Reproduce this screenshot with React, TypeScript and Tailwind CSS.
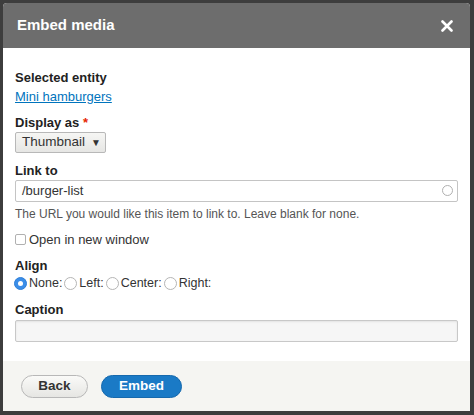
import React from 'react';

const font = { fontFamily: '"Liberation Sans", Arial, sans-serif' };

const Radio = ({ checked }: { checked?: boolean }) =>
  checked ? (
    <span className="inline-flex h-[13px] w-[13px] items-center justify-center rounded-full bg-[#3b8ee8] border border-[#2f7fd8]">
      <span className="h-[5px] w-[5px] rounded-full bg-white" />
    </span>
  ) : (
    <span className="inline-block h-[13px] w-[13px] rounded-full border border-[#b5b5b5] bg-white" />
  );

const App = () => {
  return (
    <div className="h-[415px] w-[474px] bg-[#3d3d3d] pl-[3px] pt-[3px]" style={font}>
      <div className="flex h-[408px] w-[467px] flex-col overflow-hidden rounded-t-[4px] bg-white">
        {/* Title bar */}
        <div className="flex h-[45px] shrink-0 items-center justify-between bg-[#6d6d6d] pl-[14px] pr-[17px]">
          <h1 className="text-[15px] font-bold text-white">Embed media</h1>
          <svg width="12" height="12" viewBox="0 0 12 12">
            <path d="M1.5 1.5 L10.5 10.5 M10.5 1.5 L1.5 10.5" stroke="#fff" strokeWidth="2.6" strokeLinecap="round" />
          </svg>
        </div>

        {/* Form */}
        <div className="flex-1 px-[12px] pt-[20px] text-[13px] text-[#333]">
          <div className="font-bold leading-[19px] text-[#222]">Selected entity</div>
          <a href="#" className="leading-[19px] text-[#0074bd] underline">Mini hamburgers</a>

          <div className="mt-[7px] font-bold leading-[18px] text-[#222]">
            Display as <span className="text-[#e62600]">*</span>
          </div>
          <div className="flex h-[21px] w-[91px] items-center justify-between rounded-[2px] border border-[#b8b8b8] bg-gradient-to-b from-[#f6f6f4] to-[#e6e6e4] pl-[6px] pr-[4px] text-[13.5px] text-[#333]">
            <span>Thumbnail</span>
            <span className="text-[10px]">▼</span>
          </div>

          <div className="mt-[9px] font-bold leading-[18px] text-[#222]">Link to</div>
          <div className="flex h-[22px] items-center justify-between rounded-[2px] border border-[#c4c4c4] pl-[6px] pr-[4px]">
            <span>/burger-list</span>
            <span className="h-[11px] w-[11px] rounded-full border-[1.5px] border-[#b0b0b0]" />
          </div>
          <div className="mt-[3px] text-[12px] leading-[18px] text-[#555]">
            The URL you would like this item to link to. Leave blank for none.
          </div>

          <label className="mt-[8px] flex h-[18px] items-center gap-[3px]">
            <span className="h-[11px] w-[11px] rounded-[2px] border border-[#b0b0b0] bg-white" />
            <span>Open in new window</span>
          </label>

          <div className="mt-[8px] font-bold leading-[18px] text-[#222]">Align</div>
          <div className="flex h-[17px] items-center -ml-[1px] text-[12.5px] leading-[17px]">
            {[
              ['None:', true],
              ['Left:', false],
              ['Center:', false],
              ['Right:', false],
            ].map(([label, checked], i) => (
              <span key={i} className="flex items-center gap-[2px] mr-[2px]">
                <Radio checked={checked as boolean} />
                <span>{label as string}</span>
              </span>
            ))}
          </div>

          <div className="mt-[9px] font-bold leading-[18px] text-[#222]">Caption</div>
          <div className="mt-[1px] h-[22px] rounded-[2px] border border-[#c8c8c8] bg-[#f6f6f6] shadow-[inset_0_1px_2px_rgba(0,0,0,0.08)]" />
        </div>

        {/* Buttons */}
        <div className="flex h-[50px] shrink-0 items-start gap-[13px] bg-[#f5f5f2] pl-[18px] pt-[14px]">
          <button className="h-[23px] w-[67px] rounded-full border border-[#b8b8b8] bg-gradient-to-b from-[#fafaf8] to-[#e6e6e3] text-[13.5px] font-bold text-[#333]">
            Back
          </button>
          <button className="h-[23px] w-[81px] rounded-full border border-[#1669ad] bg-[#1a7ac6] text-[13.5px] font-bold text-white">
            Embed
          </button>
        </div>
      </div>
    </div>
  );
};

export default App;
